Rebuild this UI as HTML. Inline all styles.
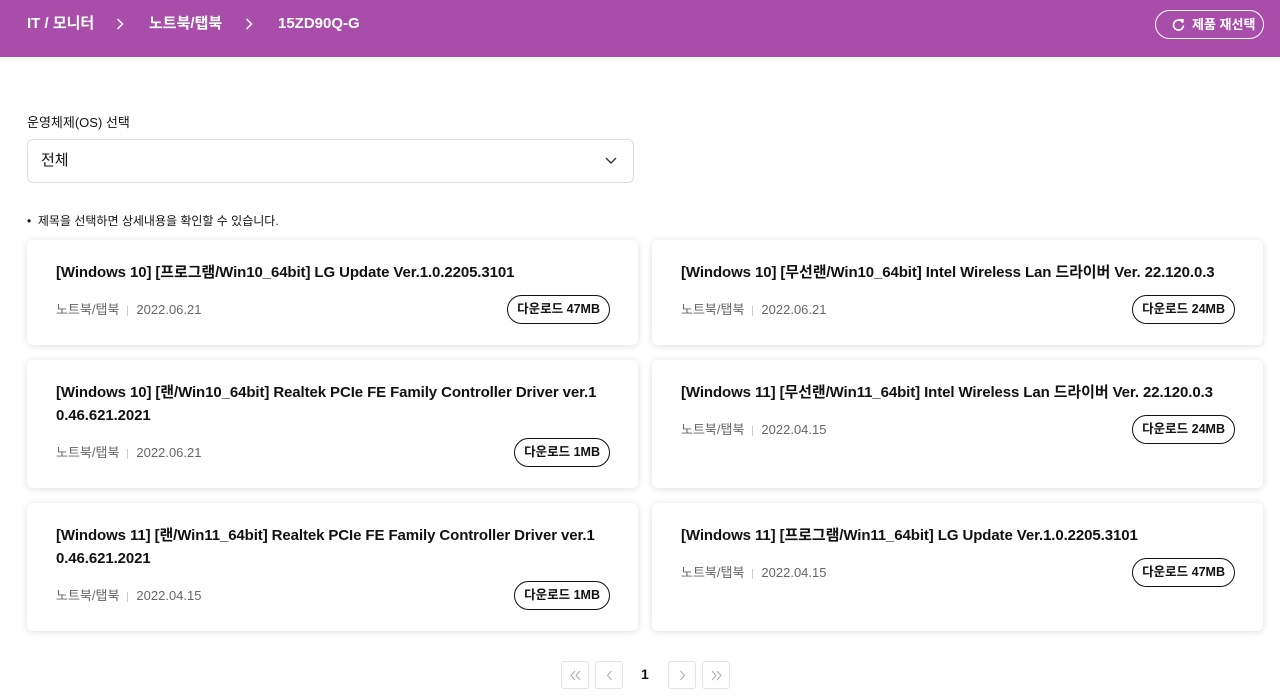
<!DOCTYPE html>
<html><head><meta charset="utf-8"><style>
*{box-sizing:border-box;margin:0;padding:0}
body{width:1280px;height:698px;overflow:hidden;background:#fff;font-family:"Liberation Sans","Noto Sans CJK KR",sans-serif;color:#111;position:relative}
.hdr{position:absolute;left:0;top:0;width:1280px;height:57px;background:#a94dab}
.hdr span{position:absolute;top:14px;height:20px;line-height:20px;color:#fff;font-size:15px;font-weight:bold;white-space:nowrap}
.hdr svg.ch{position:absolute;top:18px}
.re{position:absolute;left:1155px;top:10px;width:109px;height:29px;border:1px solid #fff;border-radius:15px;color:#fff;font-size:13px;font-weight:bold;line-height:27px;padding-left:36px}
.lbl{position:absolute;left:27px;top:112px;font-size:13px}
.sel{position:absolute;left:27px;top:139px;width:607px;height:44px;border:1px solid #ddd;border-radius:6px;font-size:15px;line-height:42px;padding-left:13px}
.note{position:absolute;left:27px;top:212px;font-size:12px}
.card{position:absolute;width:611px;background:#fff;border-radius:6px;box-shadow:0 1px 8px rgba(0,0,0,.13)}
.card h3{position:absolute;left:29px;top:21px;width:555px;font-size:15px;font-weight:bold;line-height:23px;color:#111;letter-spacing:-0.1px}
.meta{position:absolute;left:29px;font-size:13px;color:#666;line-height:16px}
.meta i{display:inline-block;width:1px;height:10px;background:#ccc;margin:0 8px;vertical-align:middle}
.dl{position:absolute;right:28px;height:29px;border:1.5px solid #111;border-radius:15px;font-size:12.5px;font-weight:bold;line-height:26px;padding:0 9px;white-space:nowrap}
.pg{position:absolute;top:661px;width:28px;height:28px;border:1px solid #e3e3e3;border-radius:3px}
.pg svg{position:absolute;left:7px;top:8px}
</style></head><body>
<div class="hdr">
<span style="left:27px">IT / 모니터</span>
<svg class="ch" style="left:116px" width="8" height="12" viewBox="0 0 8 12"><path d="M1.5 1l5 5-5 5" fill="none" stroke="#fff" stroke-width="1.5"/></svg>
<span style="left:149px">노트북/탭북</span>
<svg class="ch" style="left:245px" width="8" height="12" viewBox="0 0 8 12"><path d="M1.5 1l5 5-5 5" fill="none" stroke="#fff" stroke-width="1.5"/></svg>
<span style="left:278px">15ZD90Q-G</span>
<div class="re"><svg style="position:absolute;left:16px;top:7px" width="13" height="13" viewBox="0 0 13 13"><path d="M10.5 4A5 5 0 1 0 11.5 7.5" fill="none" stroke="#fff" stroke-width="1.6"/><path d="M8 1.5L11 2L10.5 5" fill="none" stroke="#fff" stroke-width="1.6"/></svg>제품 재선택</div>
</div>
<div class="lbl">운영체제(OS) 선택</div>
<div class="sel">전체<svg style="position:absolute;right:16px;top:17px" width="12" height="8" viewBox="0 0 12 8"><path d="M1 1l5 5 5-5" fill="none" stroke="#333" stroke-width="1.4"/></svg></div>
<div class="note">•&nbsp; 제목을 선택하면 상세내용을 확인할 수 있습니다.</div>

<div class="card" style="left:27px;top:240px;height:105px"><h3>[Windows 10] [프로그램/Win10_64bit] LG Update Ver.1.0.2205.3101</h3><div class="meta" style="top:62px">노트북/탭북<i></i>2022.06.21</div><div class="dl" style="top:55px">다운로드 47MB</div></div>
<div class="card" style="left:652px;top:240px;height:105px"><h3>[Windows 10] [무선랜/Win10_64bit] Intel Wireless Lan 드라이버 Ver. 22.120.0.3</h3><div class="meta" style="top:62px">노트북/탭북<i></i>2022.06.21</div><div class="dl" style="top:55px">다운로드 24MB</div></div>

<div class="card" style="left:27px;top:360px;height:128px"><h3>[Windows 10] [랜/Win10_64bit] Realtek PCIe FE Family Controller Driver ver.1 0.46.621.2021</h3><div class="meta" style="top:85px">노트북/탭북<i></i>2022.06.21</div><div class="dl" style="top:78px">다운로드 1MB</div></div>
<div class="card" style="left:652px;top:360px;height:128px"><h3>[Windows 11] [무선랜/Win11_64bit] Intel Wireless Lan 드라이버 Ver. 22.120.0.3</h3><div class="meta" style="top:62px">노트북/탭북<i></i>2022.04.15</div><div class="dl" style="top:55px">다운로드 24MB</div></div>

<div class="card" style="left:27px;top:503px;height:128px"><h3>[Windows 11] [랜/Win11_64bit] Realtek PCIe FE Family Controller Driver ver.1 0.46.621.2021</h3><div class="meta" style="top:85px">노트북/탭북<i></i>2022.04.15</div><div class="dl" style="top:78px">다운로드 1MB</div></div>
<div class="card" style="left:652px;top:503px;height:128px"><h3>[Windows 11] [프로그램/Win11_64bit] LG Update Ver.1.0.2205.3101</h3><div class="meta" style="top:62px">노트북/탭북<i></i>2022.04.15</div><div class="dl" style="top:55px">다운로드 47MB</div></div>

<div class="pg" style="left:561px"><svg width="13" height="11" viewBox="0 0 13 11"><path d="M6 1L2 5.5 6 10M11 1L7 5.5 11 10" fill="none" stroke="#aaa" stroke-width="1"/></svg></div>
<div class="pg" style="left:595px"><svg width="13" height="11" viewBox="0 0 13 11"><path d="M8.5 1L4.5 5.5 8.5 10" fill="none" stroke="#aaa" stroke-width="1"/></svg></div>
<div style="position:absolute;left:641px;top:666px;font-size:14px;font-weight:bold">1</div>
<div class="pg" style="left:668px"><svg width="13" height="11" viewBox="0 0 13 11"><path d="M4.5 1L8.5 5.5 4.5 10" fill="none" stroke="#aaa" stroke-width="1"/></svg></div>
<div class="pg" style="left:702px"><svg width="13" height="11" viewBox="0 0 13 11"><path d="M2 1L6 5.5 2 10M7 1L11 5.5 7 10" fill="none" stroke="#aaa" stroke-width="1"/></svg></div>
</body></html>
